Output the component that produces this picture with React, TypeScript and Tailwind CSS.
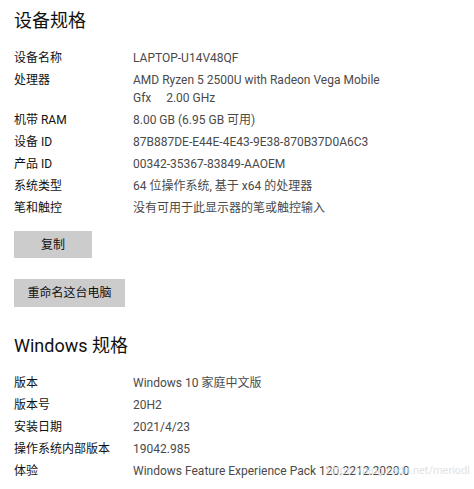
import React from 'react';

type Row = { label: string; value: React.ReactNode };

const deviceRows: Row[] = [
    { label: '设备名称', value: 'LAPTOP-U14V48QF' },
    {
        label: '处理器',
        value: (
            <>
                AMD Ryzen 5 2500U with Radeon Vega Mobile
                <br />
                <span className="whitespace-pre">Gfx     2.00 GHz</span>
            </>
        ),
    },
    { label: '机带 RAM', value: '8.00 GB (6.95 GB 可用)' },
    { label: '设备 ID', value: '87B887DE-E44E-4E43-9E38-870B37D0A6C3' },
    { label: '产品 ID', value: '00342-35367-83849-AAOEM' },
    { label: '系统类型', value: '64 位操作系统, 基于 x64 的处理器' },
    { label: '笔和触控', value: '没有可用于此显示器的笔或触控输入' },
];

const windowsRows: Row[] = [
    { label: '版本', value: 'Windows 10 家庭中文版' },
    { label: '版本号', value: '20H2' },
    { label: '安装日期', value: '2021/4/23' },
    { label: '操作系统内部版本', value: '19042.985' },
    { label: '体验', value: 'Windows Feature Experience Pack 120.2212.2020.0' },
];

const SpecTable: React.FC<{ rows: Row[] }> = ({ rows }) => (
    <div className="grid grid-cols-[119px_1fr] gap-y-[4px] text-[12px] leading-[18px]">
        {rows.map((r) => (
            <React.Fragment key={r.label}>
                <div className="text-[#111]">{r.label}</div>
                <div className="text-[#4a4a4a]">{r.value}</div>
            </React.Fragment>
        ))}
    </div>
);

export default function App() {
    return (
        <div className="relative w-[474px] h-[489px] bg-white overflow-hidden pl-[14px] pt-[7px] font-['Roboto','Noto_Sans_CJK_SC',sans-serif]">
            <h2 className="text-[18px] leading-[28px] text-[#111]">设备规格</h2>
            <div className="mt-[14px]">
                <SpecTable rows={deviceRows} />
            </div>
            <div className="mt-[14px] flex flex-col items-start gap-[21px]">
                <button className="w-[78px] h-[27px] bg-[#cccccc] text-[12px] text-[#111]">复制</button>
                <button className="w-[111px] h-[28px] bg-[#cccccc] text-[12px] text-[#111]">重命名这台电脑</button>
            </div>
            <h2 className="mt-[25px] text-[18px] leading-[28px] text-[#111]">Windows 规格</h2>
            <div className="mt-[14px]">
                <SpecTable rows={windowsRows} />
            </div>
            <div className="absolute right-[4px] top-[463px] text-[11px] text-[#e2e2e2]">https://blog.csdn.net/meriodl</div>
        </div>
    );
}
